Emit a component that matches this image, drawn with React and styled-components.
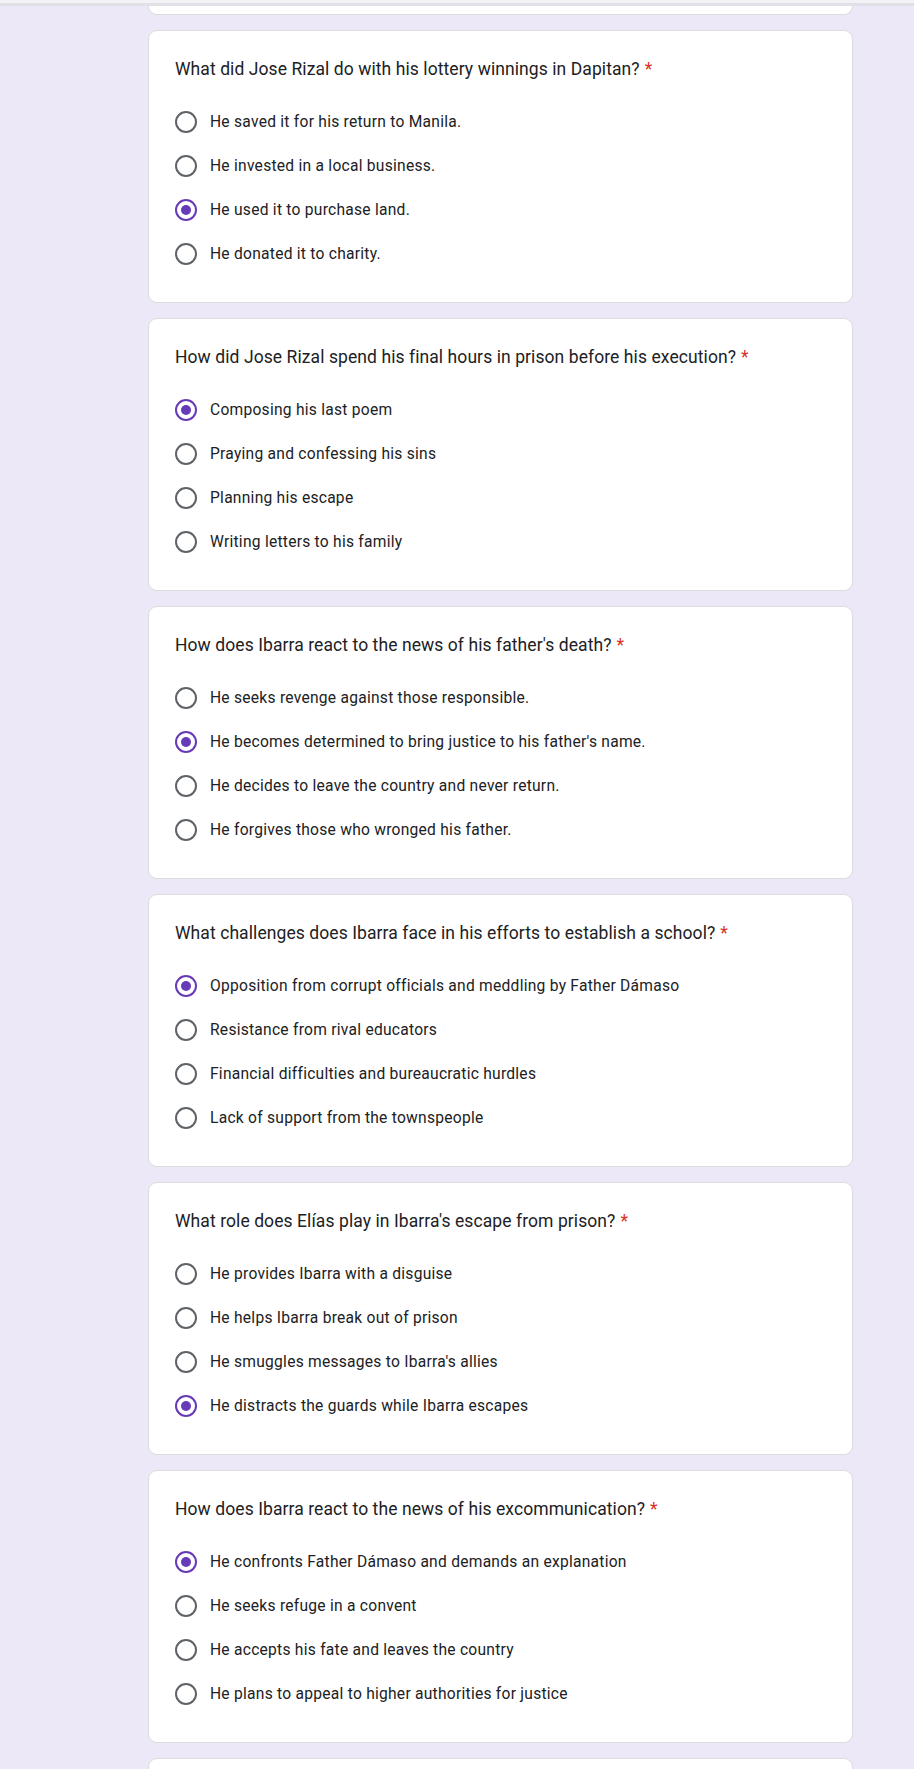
import styled, { createGlobalStyle } from "styled-components";

const GlobalStyle = createGlobalStyle`
  body {
    margin: 0;
    background: #ece8f8;
    font-family: Roboto, "Liberation Sans", Arial, sans-serif;
    color: #202124;
  }
`;

const questions = [
  {
    title: "What did Jose Rizal do with his lottery winnings in Dapitan?",
    options: [
      "He saved it for his return to Manila.",
      "He invested in a local business.",
      "He used it to purchase land.",
      "He donated it to charity.",
    ],
    checked: 2,
  },
  {
    title:
      "How did Jose Rizal spend his final hours in prison before his execution?",
    options: [
      "Composing his last poem",
      "Praying and confessing his sins",
      "Planning his escape",
      "Writing letters to his family",
    ],
    checked: 0,
  },
  {
    title: "How does Ibarra react to the news of his father's death?",
    options: [
      "He seeks revenge against those responsible.",
      "He becomes determined to bring justice to his father's name.",
      "He decides to leave the country and never return.",
      "He forgives those who wronged his father.",
    ],
    checked: 1,
  },
  {
    title:
      "What challenges does Ibarra face in his efforts to establish a school?",
    options: [
      "Opposition from corrupt officials and meddling by Father Dámaso",
      "Resistance from rival educators",
      "Financial difficulties and bureaucratic hurdles",
      "Lack of support from the townspeople",
    ],
    checked: 0,
  },
  {
    title: "What role does Elías play in Ibarra's escape from prison?",
    options: [
      "He provides Ibarra with a disguise",
      "He helps Ibarra break out of prison",
      "He smuggles messages to Ibarra's allies",
      "He distracts the guards while Ibarra escapes",
    ],
    checked: 3,
  },
  {
    title: "How does Ibarra react to the news of his excommunication?",
    options: [
      "He confronts Father Dámaso and demands an explanation",
      "He seeks refuge in a convent",
      "He accepts his fate and leaves the country",
      "He plans to appeal to higher authorities for justice",
    ],
    checked: 0,
  },
];

const TopBar = styled.div`
  height: 3px;
  background: #f3f3f7;
  border-bottom: 3px solid #dfe1e6;
`;

const Column = styled.main`
  display: flex;
  flex-direction: column;
  gap: 15px;
  width: 705px;
  margin-left: 148px;
  padding-bottom: 40px;
`;

const Card = styled.section`
  background: #fff;
  border: 1px solid #dadce0;
  border-radius: 9px;
  padding: 25px 26px 26px;
  min-height: ${(p) => p.$minHeight || 0}px;
`;

const CardTail = styled.div`
  height: 8px;
  background: #fff;
  border: 1px solid #dadce0;
  border-top: none;
  border-radius: 0 0 9px 9px;
`;

const Title = styled.div`
  font-size: 17.5px;
  line-height: 26px;
  letter-spacing: 0.08px;
  color: #202124;
`;

const Required = styled.span`
  color: #d93025;
  margin-left: 5px;
`;

const OptionList = styled.div`
  margin-top: 18px;
  display: flex;
  flex-direction: column;
`;

const Option = styled.label`
  height: 44px;
  display: flex;
  align-items: center;
  gap: 13px;
  font-size: 15.6px;
  letter-spacing: 0.25px;
  color: #202124;
`;

const Radio = styled.span`
  box-sizing: border-box;
  width: 22px;
  height: 22px;
  flex: none;
  border-radius: 50%;
  border: 2px solid ${(p) => (p.$checked ? "#673ab7" : "#5f6368")};
  display: flex;
  align-items: center;
  justify-content: center;

  &::after {
    content: "";
    width: 10px;
    height: 10px;
    border-radius: 50%;
    background: #673ab7;
    display: ${(p) => (p.$checked ? "block" : "none")};
  }
`;

function Question({ q }) {
  return (
    <Card>
      <Title>
        {q.title}
        <Required>*</Required>
      </Title>
      <OptionList>
        {q.options.map((opt, i) => (
          <Option key={opt}>
            <Radio $checked={i === q.checked} />
            {opt}
          </Option>
        ))}
      </OptionList>
    </Card>
  );
}

export default function App() {
  return (
    <>
      <GlobalStyle />
      <TopBar />
      <Column>
        <CardTail />
        {questions.map((q) => (
          <Question key={q.title} q={q} />
        ))}
        <Card $minHeight={60} />
      </Column>
    </>
  );
}
